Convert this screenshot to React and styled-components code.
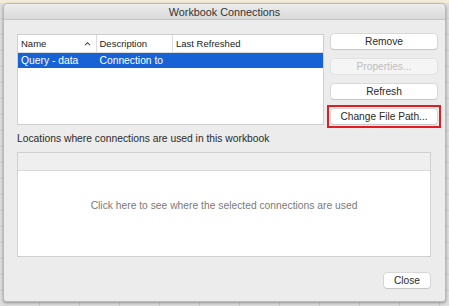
import React from "react";
import styled, { createGlobalStyle } from "styled-components";

const GlobalStyle = createGlobalStyle`
  html, body {
    margin: 0;
    padding: 0;
  }
  body {
    width: 449px;
    height: 306px;
    overflow: hidden;
    font-family: "Liberation Sans", Arial, sans-serif;
    background:
      linear-gradient(#f3ecd9 0 3px, transparent 3px),
      repeating-linear-gradient(90deg, transparent 0 39px, #c9c9c9 39px 40px),
      repeating-linear-gradient(0deg, transparent 0 15px, #cfcfcf 15px 16px),
      #dedede;
  }
`;

const columns = [
  { label: "Name", width: 79, sorted: true },
  { label: "Description", width: 77 },
  { label: "Last Refreshed", width: 151 },
];

const rows = [{ name: "Query - data", description: "Connection to", refreshed: "" }];

export default function App() {
  return (
    <>
      <GlobalStyle />
      <S.Window>
        <S.TitleBar>Workbook Connections</S.TitleBar>
        <S.Body>
          <S.Top>
            <S.Table>
              <S.HeadRow>
                {columns.map((col) => (
                  <S.HeadCell key={col.label} $width={col.width}>
                    {col.label}
                    {col.sorted && (
                      <S.Chevron viewBox="0 0 8 5">
                        <path d="M1 4.5 L4 1.5 L7 4.5" fill="none" stroke="#333" strokeWidth="1.2" />
                      </S.Chevron>
                    )}
                  </S.HeadCell>
                ))}
              </S.HeadRow>
              {rows.map((row) => (
                <S.Row key={row.name} $selected>
                  <S.Cell $width={79}>{row.name}</S.Cell>
                  <S.Cell $width={77}>{row.description}</S.Cell>
                  <S.Cell $width={151}>{row.refreshed}</S.Cell>
                </S.Row>
              ))}
            </S.Table>
            <S.Buttons>
              <S.Button>Remove</S.Button>
              <S.Button disabled>Properties...</S.Button>
              <S.Button>Refresh</S.Button>
              <S.Highlight>
                <S.Button>Change File Path...</S.Button>
              </S.Highlight>
            </S.Buttons>
          </S.Top>
          <S.Label>Locations where connections are used in this workbook</S.Label>
          <S.Locations>
            <S.LocationsHead />
            <S.LocationsBody>Click here to see where the selected connections are used</S.LocationsBody>
          </S.Locations>
          <S.Footer>
            <S.Button $small>Close</S.Button>
          </S.Footer>
        </S.Body>
      </S.Window>
    </>
  );
}

const S = {
  Window: styled.div`
    margin: 3px 0 0 3px;
    width: 443px;
    height: 299px;
    box-sizing: border-box;
    border-radius: 5px 5px 3px 3px;
    background: #ececec;
    border: 1px solid #b9b9b9;
    box-shadow: 0 1px 3px rgba(0, 0, 0, 0.35);
    overflow: hidden;
    display: flex;
    flex-direction: column;
  `,
  TitleBar: styled.div`
    height: 15px;
    flex: none;
    display: flex;
    align-items: center;
    justify-content: center;
    font-size: 10.8px;
    color: #333;
    background: linear-gradient(#ededed, #d9d9d9);
    border-bottom: 1px solid #c2c2c2;
  `,
  Body: styled.div`
    flex: 1;
    display: flex;
    flex-direction: column;
    padding: 14px 0 0 13px;
  `,
  Top: styled.div`
    display: flex;
    gap: 7px;
  `,
  Table: styled.div`
    width: 307px;
    height: 91px;
    box-sizing: border-box;
    background: #fff;
    border: 1px solid #cfcfcf;
  `,
  HeadRow: styled.div`
    display: flex;
    height: 17px;
    border-bottom: 1px solid #dcdcdc;
  `,
  HeadCell: styled.div`
    width: ${(p) => p.$width}px;
    box-sizing: border-box;
    padding: 0 3px;
    display: flex;
    align-items: center;
    justify-content: space-between;
    font-size: 9.5px;
    color: #222;
    border-right: 1px solid #dcdcdc;
    &:last-child {
      border-right: none;
    }
  `,
  Chevron: styled.svg`
    width: 7px;
    height: 5px;
    margin-right: 2px;
  `,
  Row: styled.div`
    display: flex;
    height: 15px;
    background: ${(p) => (p.$selected ? "#1763d6" : "transparent")};
    color: ${(p) => (p.$selected ? "#fff" : "#222")};
  `,
  Cell: styled.div`
    width: ${(p) => p.$width}px;
    box-sizing: border-box;
    padding: 0 3px;
    display: flex;
    align-items: center;
    font-size: 10.3px;
    white-space: nowrap;
  `,
  Buttons: styled.div`
    display: flex;
    flex-direction: column;
    gap: 10px;
    width: 106px;
  `,
  Highlight: styled.div`
    margin: -4px;
    padding: 2px;
    border: 2px solid #e31b23;
    display: flex;
  `,
  Button: styled.button`
    width: ${(p) => (p.$small ? "46px" : "106px")};
    height: 15px;
    box-sizing: border-box;
    padding: 0;
    font-family: "Liberation Sans", Arial, sans-serif;
    font-size: 10.2px;
    color: #2a2a2a;
    background: #fff;
    border: none;
    border-radius: 3px;
    box-shadow: 0 0 0 0.5px #c4c4c4, 0 1px 1px rgba(0, 0, 0, 0.15);
    &:disabled {
      color: #bdbdbd;
      background: #f5f5f5;
      box-shadow: 0 0 0 0.5px #d6d6d6;
    }
  `,
  Label: styled.div`
    margin-top: 8px;
    font-size: 10.3px;
    color: #2a2a2a;
    height: 13px;
  `,
  Locations: styled.div`
    margin-top: 6px;
    width: 414px;
    height: 105px;
    box-sizing: border-box;
    display: flex;
    flex-direction: column;
    background: #fff;
    border: 1px solid #d0d0d0;
  `,
  LocationsHead: styled.div`
    height: 17px;
    flex: none;
    background: #efefef;
    border-bottom: 1px solid #d8d8d8;
  `,
  LocationsBody: styled.div`
    flex: 1;
    display: flex;
    align-items: center;
    justify-content: center;
    padding-bottom: 16px;
    font-size: 10.3px;
    color: #7a7a7a;
  `,
  Footer: styled.div`
    display: flex;
    justify-content: flex-end;
    margin-top: 16px;
    padding-right: 15px;
  `,
};
